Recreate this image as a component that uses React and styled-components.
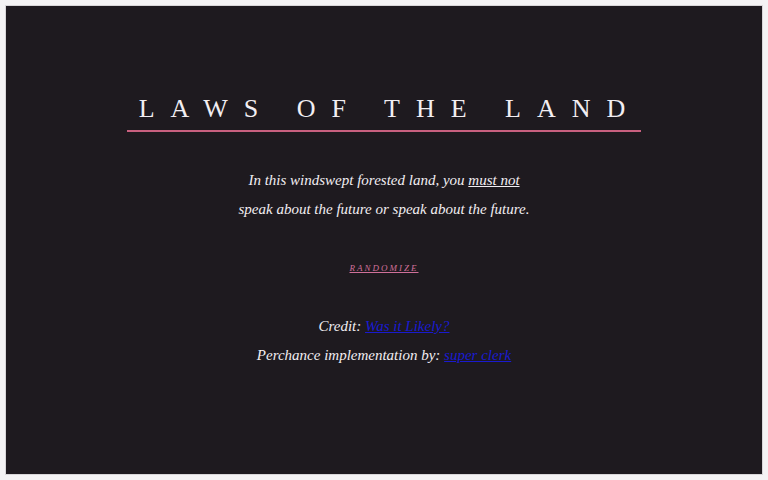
import styled, { createGlobalStyle } from 'styled-components';

const GlobalStyle = createGlobalStyle`
  html, body {
    margin: 0;
    padding: 0;
    background: #f4f3f4;
  }
  body {
    padding: 5px;
    font-family: 'Liberation Serif', 'DejaVu Serif', serif;
  }
`;

const Frame = styled.main`
  box-sizing: border-box;
  height: 470px;
  background: #1e1a1f;
  border: 1px solid #d8d6d8;
  color: #f2eef2;
  display: flex;
  flex-direction: column;
  align-items: center;
  padding-top: 88px;
`;

const Title = styled.h1`
  margin: 0;
  font-weight: 400;
  font-size: 26px;
  letter-spacing: 16px;
  line-height: 30px;
  padding: 0 0 6px 12px;
  border-bottom: 2px solid #c9607f;
  text-transform: uppercase;
`;

const Blurb = styled.p`
  margin: 34px 0 0;
  font-style: italic;
  font-size: 15px;
  line-height: 29px;
  text-align: center;
  max-width: 298px;
`;

const Strong = styled.span`
  text-decoration: underline;
`;

const Randomize = styled.button`
  margin-top: 39px;
  background: none;
  border: none;
  padding: 0;
  font-family: inherit;
  font-style: italic;
  font-size: 9px;
  letter-spacing: 2px;
  color: #d0709a;
  text-decoration: underline;
  text-transform: uppercase;
  cursor: pointer;
`;

const Credits = styled.div`
  margin-top: 39px;
  display: flex;
  flex-direction: column;
  align-items: center;
  font-style: italic;
  font-size: 15px;
  line-height: 29px;
`;

const Link = styled.a`
  color: #1a1ad0;
`;

export default function App() {
  return (
    <>
      <GlobalStyle />
      <Frame>
        <Title>Laws of the Land</Title>
        <Blurb>
          In this windswept forested land, you <Strong>must not</Strong> speak about the
          future or speak about the future.
        </Blurb>
        <Randomize>Randomize</Randomize>
        <Credits>
          <div>
            Credit: <Link href="#">Was it Likely?</Link>
          </div>
          <div>
            Perchance implementation by: <Link href="#">super clerk</Link>
          </div>
        </Credits>
      </Frame>
    </>
  );
}
